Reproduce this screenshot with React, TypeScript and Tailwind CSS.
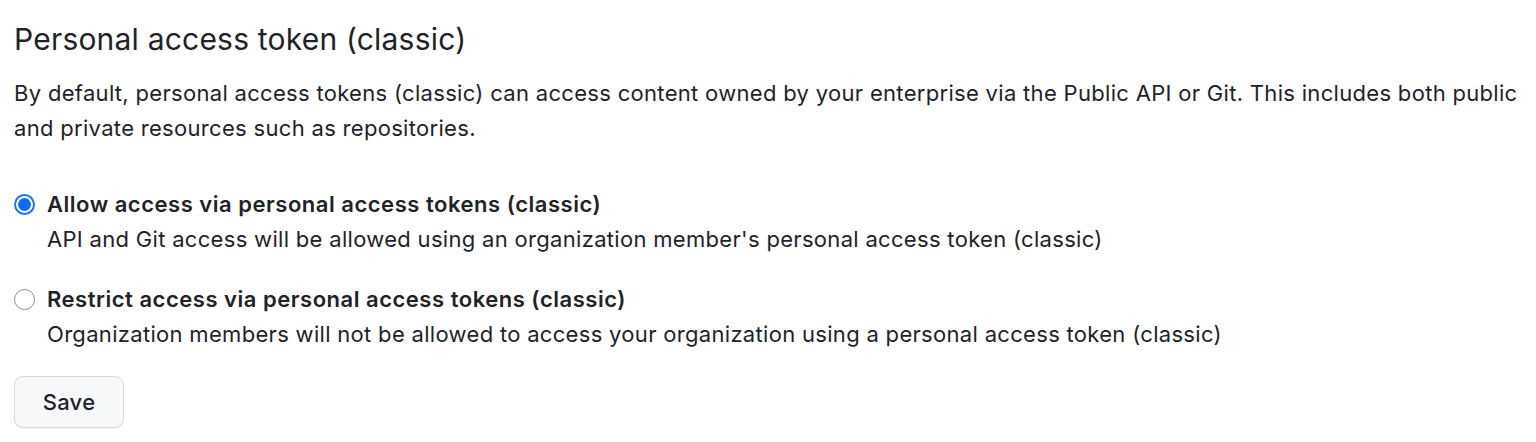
import { useState } from 'react';

type Option = {
  id: string;
  label: string;
  hint: string;
};

const options: Option[] = [
  {
    id: 'allow',
    label: 'Allow access via personal access tokens (classic)',
    hint: "API and Git access will be allowed using an organization member's personal access token (classic)",
  },
  {
    id: 'restrict',
    label: 'Restrict access via personal access tokens (classic)',
    hint: 'Organization members will not be allowed to access your organization using a personal access token (classic)',
  },
];

function Radio({ checked }: { checked: boolean }) {
  if (checked) {
    return (
      <span className="w-[21px] h-[21px] rounded-full border-[2px] border-[#1a73f5] bg-white flex items-center justify-center shrink-0">
        <span className="w-[13px] h-[13px] rounded-full bg-[#0b6cff]" />
      </span>
    );
  }
  return <span className="w-[21px] h-[21px] rounded-full border-[1.5px] border-[#8c8c8c] bg-white shrink-0" />;
}

export default function App() {
  const [value, setValue] = useState('allow');

  return (
    <div
      className="bg-white text-[#1f2328] pl-[14px] pt-[19px] h-[442px] w-[1536px] overflow-hidden"
      style={{ fontFamily: 'Inter, "Noto Sans", sans-serif' }}
    >
      <h2 className="text-[30px] leading-[40px] font-normal tracking-[0.2px]">Personal access token (classic)</h2>
      <p className="mt-[17px] text-[22px] leading-[35px] tracking-[0.31px] pr-[2px]">
        By default, personal access tokens (classic) can access content owned by your enterprise via the Public API or Git. This includes both public and private resources such as repositories.
      </p>

      <div className="mt-[41px] flex flex-col gap-[25px]">
        {options.map((opt) => (
          <label key={opt.id} className="flex flex-col cursor-pointer" onClick={() => setValue(opt.id)}>
            <span className="flex items-center gap-[12px] h-[35px]">
              <Radio checked={value === opt.id} />
              <span className="text-[22px] font-semibold leading-[35px] tracking-[0.52px]">{opt.label}</span>
            </span>
            <span className="pl-[33px] text-[22px] leading-[35px] tracking-[0.31px]">{opt.hint}</span>
          </label>
        ))}
      </div>

      <button
        type="button"
        className="mt-[24px] w-[110px] h-[52px] rounded-[9px] border border-[#d5d8dc] bg-[#f6f8fa] text-[22px] font-medium tracking-[0.3px] shadow-[0_1px_0_rgba(31,35,40,0.04)]"
      >
        Save
      </button>
    </div>
  );
}
